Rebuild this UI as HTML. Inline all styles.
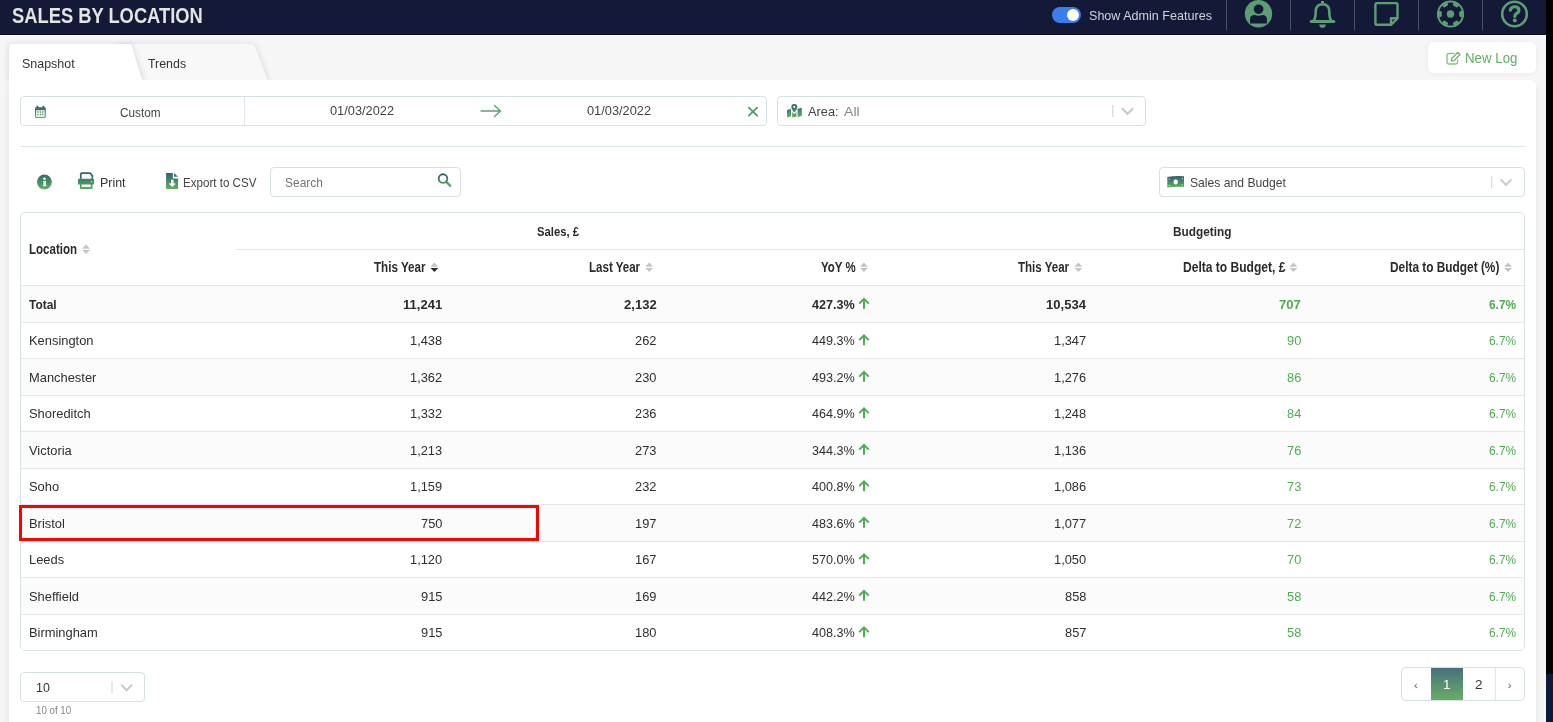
<!DOCTYPE html><html><head><meta charset="utf-8"><style>
*{box-sizing:border-box;margin:0;padding:0}
html,body{width:1553px;height:722px;overflow:hidden;background:#000;font-family:"Liberation Sans",sans-serif;color:#333}
.t{position:absolute;white-space:pre;line-height:1}
.a{position:absolute}
.box{position:absolute;border:1px solid #d6e1e4;border-radius:4px;background:#fff}
svg{position:absolute;overflow:visible}
</style></head><body>
<svg style="left:0;top:0" width="0" height="0"><defs><linearGradient id="gCal" gradientUnits="userSpaceOnUse" x1="0" y1="105.8" x2="0" y2="118"><stop offset="0" stop-color="#2f6170"/><stop offset="1" stop-color="#5bb05f"/></linearGradient><linearGradient id="gMap" gradientUnits="userSpaceOnUse" x1="0" y1="104" x2="0" y2="117.5"><stop offset="0" stop-color="#2f6170"/><stop offset="1" stop-color="#5bb05f"/></linearGradient><linearGradient id="gTool" gradientUnits="userSpaceOnUse" x1="0" y1="173" x2="0" y2="189"><stop offset="0" stop-color="#2f6170"/><stop offset="1" stop-color="#5bb05f"/></linearGradient><linearGradient id="gSrch" gradientUnits="userSpaceOnUse" x1="0" y1="174" x2="0" y2="187"><stop offset="0" stop-color="#2f6170"/><stop offset="1" stop-color="#5bb05f"/></linearGradient><linearGradient id="gMon" gradientUnits="userSpaceOnUse" x1="0" y1="176" x2="0" y2="187.6"><stop offset="0" stop-color="#2f6170"/><stop offset="1" stop-color="#5bb05f"/></linearGradient></defs></svg>
<div class="a" style="left:0;top:0;width:1546px;height:722px;background:#f6f6f6"></div>
<div class="a" style="left:1546px;top:674px;width:7px;height:48px;background:#0b1a38"></div>
<div class="a" style="left:0;top:0;width:1546px;height:35px;background:#131936;border-bottom:1px solid #070c22"></div>
<div class="a" style="left:0;top:35px;width:1546px;height:1px;background:#fdfdfd"></div>
<div class="t" style="left:12.30px;top:6px;font-size:21.40px;font-weight:bold;color:#e4e4e2;transform:scaleX(0.8569);transform-origin:0 0;">SALES BY LOCATION</div>
<div class="a" style="left:1052px;top:7px;width:29px;height:16px;border-radius:8px;background:#3b7ded"></div>
<div class="a" style="left:1066.5px;top:8.8px;width:12.4px;height:12.4px;border-radius:50%;background:#fff"></div>
<div class="t" style="left:1088.70px;top:9px;font-size:13.60px;color:#d2d3d8;transform:scaleX(0.9243);transform-origin:0 0;">Show Admin Features</div>
<div class="a" style="left:1226.0px;top:0;width:1px;height:30px;background:#4a5068"></div>
<div class="a" style="left:1290.0px;top:0;width:1px;height:30px;background:#4a5068"></div>
<div class="a" style="left:1354.0px;top:0;width:1px;height:30px;background:#4a5068"></div>
<div class="a" style="left:1418.0px;top:0;width:1px;height:30px;background:#4a5068"></div>
<div class="a" style="left:1482.0px;top:0;width:1px;height:30px;background:#4a5068"></div>
<svg style="left:0;top:0" width="1553" height="35" viewBox="0 0 1553 35"><circle cx="1258.5" cy="13.7" r="13.7" fill="#5c9e74"/><circle cx="1258.6" cy="9.2" r="4.8" fill="#131936"/><path d="M1250 23.6 V19.5 Q1250 15 1254.5 15 Q1256.5 15.8 1258.5 15.8 Q1260.5 15.8 1262.5 15 Q1267 15 1267 19.5 V23.6 Z" fill="#131936"/><path d="M1322.5 1 V3.2" stroke="#5c9e74" stroke-width="3"/><path d="M1313.6 20.6 C1315.6 18.4 1315.7 14.5 1315.7 11.5 C1315.7 6.6 1318.4 4.2 1322.5 4.2 C1326.6 4.2 1329.3 6.6 1329.3 11.5 C1329.3 14.5 1329.4 18.4 1331.4 20.6" fill="none" stroke="#5c9e74" stroke-width="2.6" stroke-linecap="round"/><path d="M1311.2 21.6 H1333.8" stroke="#5c9e74" stroke-width="3" stroke-linecap="round"/><path d="M1319.2 24.4 H1325.8 Q1325.6 27.8 1322.5 27.8 Q1319.4 27.8 1319.2 24.4 Z" fill="#5c9e74"/><path d="M1377 3.1 H1396 Q1397.5 3.1 1397.5 4.6 V18.3 L1391 24.8 H1377 Q1375.4 24.8 1375.4 23.2 V4.6 Q1375.4 3.1 1377 3.1 Z" fill="none" stroke="#5c9e74" stroke-width="2.4" stroke-linejoin="round"/><path d="M1397.5 18.3 H1391 V24.8" fill="none" stroke="#5c9e74" stroke-width="2.4" stroke-linejoin="round"/><circle cx="1450.5" cy="14" r="12.6" fill="none" stroke="#5c9e74" stroke-width="2"/><circle cx="1450.5" cy="14" r="3.7" fill="#5c9e74"/><circle cx="1514.5" cy="14" r="12.3" fill="none" stroke="#5c9e74" stroke-width="2.6"/><path d="M1510.3 10.2 Q1511 6.8 1514.8 6.8 Q1518.9 6.8 1518.9 10.2 Q1518.9 12.3 1516.7 13.4 Q1514.8 14.3 1514.8 16.4" fill="none" stroke="#5c9e74" stroke-width="3.1" stroke-linecap="round"/><circle cx="1514.8" cy="20.4" r="2" fill="#5c9e74"/></svg>
<svg style="left:0;top:0" width="1553" height="35" viewBox="0 0 1553 35"><rect x="-2.9" y="-2.3" width="5.8" height="4.6" rx="1.5" fill="#5c9e74" transform="translate(1450.5 14) rotate(0) translate(11 0) rotate(90)"/><rect x="-2.9" y="-2.3" width="5.8" height="4.6" rx="1.5" fill="#5c9e74" transform="translate(1450.5 14) rotate(60) translate(11 0) rotate(90)"/><rect x="-2.9" y="-2.3" width="5.8" height="4.6" rx="1.5" fill="#5c9e74" transform="translate(1450.5 14) rotate(120) translate(11 0) rotate(90)"/><rect x="-2.9" y="-2.3" width="5.8" height="4.6" rx="1.5" fill="#5c9e74" transform="translate(1450.5 14) rotate(180) translate(11 0) rotate(90)"/><rect x="-2.9" y="-2.3" width="5.8" height="4.6" rx="1.5" fill="#5c9e74" transform="translate(1450.5 14) rotate(240) translate(11 0) rotate(90)"/><rect x="-2.9" y="-2.3" width="5.8" height="4.6" rx="1.5" fill="#5c9e74" transform="translate(1450.5 14) rotate(300) translate(11 0) rotate(90)"/></svg>
<svg style="left:0;top:0" width="1553" height="90" viewBox="0 0 1553 90">
<defs><filter id="sh" x="-20%" y="-50%" width="140%" height="200%"><feGaussianBlur stdDeviation="3"/></filter>
<linearGradient id="g1" x1="0" y1="0" x2="0" y2="1"><stop offset="0" stop-color="#33636f"/><stop offset="1" stop-color="#5daf60"/></linearGradient></defs>
<path d="M116 82 V48 Q116 44 120 44 H252 Q255 44 256.5 48 L270 82 Z" fill="#000" opacity="0.10" filter="url(#sh)"/>
<path d="M115 80 V48 Q115 44 119 44 H251 Q254 44 255 47 L267.5 80 Z" fill="#f8f8f8"/>
<path d="M8 82 V48 Q8 44 12 44 H129 Q132 44 133.5 48 L145 82 Z" fill="#000" opacity="0.10" filter="url(#sh)"/>
<path d="M9 80 V48 Q9 44 13 44 H128 Q131 44 132 47 L142 80 Z" fill="#fff"/>
<rect x="1427.5" y="43" width="108.5" height="31" rx="6" fill="#000" opacity="0.045" filter="url(#sh)"/>
<rect x="7" y="84" width="1531" height="700" rx="6" fill="#000" opacity="0.05" filter="url(#sh)"/>
</svg>
<div class="t" style="left:21.50px;top:58px;font-size:12.80px;color:#333;transform:scaleX(0.9726);transform-origin:0 0;">Snapshot</div>
<div class="t" style="left:147.90px;top:58px;font-size:12.80px;color:#333;transform:scaleX(0.9680);transform-origin:0 0;">Trends</div>
<div class="a" style="left:1428px;top:42px;width:108px;height:31px;border-radius:6px;background:#fff"></div>
<svg style="left:0;top:0" width="1553" height="80"><path d="M1454.5 53.5 H1448.8 Q1447 53.5 1447 55.3 V62.3 Q1447 64 1448.8 64 H1455.8 Q1457.5 64 1457.5 62.3 V59.6" fill="none" stroke="#5fb062" stroke-width="1.4" opacity="0.75"/><path d="M1451.5 60.8 L1451.8 58.4 L1457.8 52.4 L1460 54.6 L1454 60.6 Z" fill="none" stroke="#5fb062" stroke-width="1.3" stroke-linejoin="round"/></svg>
<div class="t" style="left:1464.60px;top:52px;font-size:13.80px;color:#5fb062;transform:scaleX(0.9625);transform-origin:0 0;">New Log</div>
<div class="a" style="left:9px;top:80px;width:1527px;height:660px;background:#fff;border-radius:0 6px 0 0"></div>
<div class="box" style="left:20px;top:96px;width:747px;height:30px"></div>
<div class="a" style="left:244px;top:97px;width:1px;height:28px;background:#dde6e8"></div>
<svg style="left:0;top:0" width="1553" height="140"><defs><linearGradient id="g2" x1="0" y1="0" x2="0" y2="1"><stop offset="0" stop-color="#33636f"/><stop offset="1" stop-color="#5daf60"/></linearGradient></defs><rect x="35" y="107.2" width="10.8" height="10.8" rx="1.2" fill="url(#gCal)"/><rect x="36.5" y="105.8" width="1.8" height="3" fill="url(#gCal)"/><rect x="42.5" y="105.8" width="1.8" height="3" fill="url(#gCal)"/><rect x="36.2" y="110.3" width="8.4" height="6.6" fill="#fff"/><g fill="#5a9a6a"><rect x="37.3" y="111.2" width="1.3" height="1.6"/><rect x="39.7" y="111.2" width="1.3" height="1.6"/><rect x="42.1" y="111.2" width="1.3" height="1.6"/><rect x="37.3" y="113.8" width="1.3" height="1.6"/><rect x="39.7" y="113.8" width="1.3" height="1.6"/><rect x="42.1" y="113.8" width="1.3" height="1.6"/></g><path d="M481 111 H500.5 M494.5 105.5 L500.5 111 L494.5 116.5" fill="none" stroke="#5f9f74" stroke-width="1.3" stroke-linecap="round"/><path d="M748.8 107.6 L757.2 115.6 M757.2 107.6 L748.8 115.6" stroke="#4f9a6c" stroke-width="1.8" stroke-linecap="round"/></svg>
<div class="t" style="left:119.80px;top:107px;font-size:12.70px;color:#444;transform:scaleX(0.9257);transform-origin:0 0;">Custom</div>
<div class="t" style="left:330.30px;top:105px;font-size:12.70px;color:#444;transform:scaleX(1.0084);transform-origin:0 0;">01/03/2022</div>
<div class="t" style="left:586.60px;top:105px;font-size:12.70px;color:#444;transform:scaleX(1.0084);transform-origin:0 0;">01/03/2022</div>
<div class="box" style="left:777px;top:96px;width:369px;height:30px"></div>
<svg style="left:0;top:0" width="1553" height="140"><defs><linearGradient id="g3" x1="0" y1="0" x2="0" y2="1"><stop offset="0" stop-color="#33636f"/><stop offset="1" stop-color="#5daf60"/></linearGradient></defs><path d="M787 110 L791 108.8 V116.3 L787 117.5 Z M792.2 112 L794.3 114.3 L796.4 112 V116.8 L792.2 117.4 Z M797.6 108.8 L801.8 107.8 V115.8 L797.6 117.2 Z" fill="url(#gMap)"/><path d="M794.3 104 Q797.3 104 797.3 107 Q797.3 109 794.3 112.6 Q791.3 109 791.3 107 Q791.3 104 794.3 104 Z" fill="url(#gMap)"/><circle cx="794.3" cy="106.8" r="1.1" fill="#fff"/><rect x="1112.3" y="105" width="1" height="12" fill="#cfcfcf"/><path d="M1121.8 108.2 L1127.5 113.8 L1133.2 108.2" fill="none" stroke="#c8c8c8" stroke-width="2"/></svg>
<div class="t" style="left:807.70px;top:105px;font-size:13.30px;color:#444;transform:scaleX(0.9627);transform-origin:0 0;">Area:</div>
<div class="t" style="left:844.00px;top:105px;font-size:13.30px;color:#888;transform:scaleX(1.0635);transform-origin:0 0;">All</div>
<div class="a" style="left:20px;top:146px;width:1505px;height:1px;background:#dde6e8"></div>
<div class="box" style="left:270px;top:167px;width:191px;height:30px"></div>
<div class="box" style="left:1159px;top:167px;width:366px;height:30px"></div>
<svg style="left:0;top:0" width="1553" height="200"><defs><linearGradient id="g4" x1="0" y1="0" x2="0" y2="1"><stop offset="0" stop-color="#33636f"/><stop offset="1" stop-color="#5daf60"/></linearGradient></defs><circle cx="44.4" cy="181.9" r="7.4" fill="url(#gTool)"/><circle cx="44.5" cy="178.8" r="1.3" fill="#fff"/><path d="M43 181 H45.8 V185.3 H46.3 V186.2 H42.8 V185.3 H43.5 V182 H43 Z" fill="#fff"/><path d="M80.8 180 V174.3 Q80.8 173.2 81.9 173.2 H90 L92.3 175.5 V180" fill="none" stroke="url(#gTool)" stroke-width="1.8"/><path d="M79.2 178.8 H92.8 Q94 178.8 94 180 V184.6 H78 V180 Q78 178.8 79.2 178.8 Z" fill="url(#gTool)"/><path d="M80.8 183.5 V188 H91.6 V183.5" fill="none" stroke="url(#gTool)" stroke-width="1.8"/><circle cx="91.4" cy="181.6" r="0.6" fill="#fff"/><path d="M166.1 173 H172.8 V178.4 H178 V188.9 H166.1 Z" fill="url(#gTool)"/><path d="M174 173 L178 176.8 H174 Z" fill="url(#gTool)"/><path d="M171 179.8 H173.6 V183.4 H176 L172.3 187 L168.5 183.4 H171 Z" fill="#fff"/><circle cx="443" cy="178.6" r="4.3" fill="none" stroke="url(#gSrch)" stroke-width="1.9"/><path d="M446.2 181.8 L450.3 185.9" stroke="url(#gSrch)" stroke-width="2.2" stroke-linecap="round"/><path d="M1167.3 177 Q1175 175.6 1184 176.3 V187 Q1175 186.2 1167.3 187.6 Z" fill="url(#gMon)"/><ellipse cx="1175.7" cy="181.9" rx="2.2" ry="2.6" fill="#fff"/><circle cx="1169.3" cy="179" r="0.6" fill="#fff"/><circle cx="1182.2" cy="178.6" r="0.6" fill="#fff"/><circle cx="1169.3" cy="185.6" r="0.6" fill="#fff"/><circle cx="1182.2" cy="184.9" r="0.6" fill="#fff"/><rect x="1491.2" y="176.3" width="1" height="12" fill="#cfcfcf"/><path d="M1500.6 179.4 L1506 184.9 L1511.4 179.4" fill="none" stroke="#c8c8c8" stroke-width="2"/></svg>
<div class="t" style="left:99.50px;top:176px;font-size:13.00px;color:#333;transform:scaleX(0.9545);transform-origin:0 0;">Print</div>
<div class="t" style="left:183.40px;top:176px;font-size:13.00px;color:#444;transform:scaleX(0.8913);transform-origin:0 0;">Export to CSV</div>
<div class="t" style="left:284.50px;top:176px;font-size:13.40px;color:#757575;transform:scaleX(0.8946);transform-origin:0 0;">Search</div>
<div class="t" style="left:1190.00px;top:176px;font-size:13.50px;color:#444;transform:scaleX(0.9007);transform-origin:0 0;">Sales and Budget</div>
<div class="a" style="left:20px;top:212px;width:1505px;height:439px;border:1px solid #d6e1e4;border-radius:5px;background:#fff;overflow:hidden">
<div class="a" style="left:0;top:72.5px;width:1505px;height:36.5px;background:#fbfbfb"></div>
<div class="a" style="left:0;top:109.0px;width:1505px;height:36.5px;background:#ffffff"></div>
<div class="a" style="left:0;top:145.5px;width:1505px;height:36.5px;background:#fbfbfb"></div>
<div class="a" style="left:0;top:182.0px;width:1505px;height:36.5px;background:#ffffff"></div>
<div class="a" style="left:0;top:218.5px;width:1505px;height:36.5px;background:#fbfbfb"></div>
<div class="a" style="left:0;top:255.0px;width:1505px;height:36.5px;background:#ffffff"></div>
<div class="a" style="left:0;top:291.5px;width:1505px;height:36.5px;background:#fbfbfb"></div>
<div class="a" style="left:0;top:328.0px;width:1505px;height:36.5px;background:#ffffff"></div>
<div class="a" style="left:0;top:364.5px;width:1505px;height:36.5px;background:#fbfbfb"></div>
<div class="a" style="left:0;top:401.0px;width:1505px;height:36.5px;background:#ffffff"></div>
</div>
<div class="a" style="left:236px;top:248.5px;width:1288px;height:1px;background:#dfe6e8"></div>
<div class="a" style="left:21px;top:285.0px;width:1503px;height:1px;background:#dfe6e8"></div>
<div class="a" style="left:21px;top:321.5px;width:1503px;height:1px;background:#e4e6ea"></div>
<div class="a" style="left:21px;top:358.0px;width:1503px;height:1px;background:#e4e6ea"></div>
<div class="a" style="left:21px;top:394.5px;width:1503px;height:1px;background:#e4e6ea"></div>
<div class="a" style="left:21px;top:431.0px;width:1503px;height:1px;background:#e4e6ea"></div>
<div class="a" style="left:21px;top:467.5px;width:1503px;height:1px;background:#e4e6ea"></div>
<div class="a" style="left:21px;top:504.0px;width:1503px;height:1px;background:#e4e6ea"></div>
<div class="a" style="left:21px;top:540.5px;width:1503px;height:1px;background:#e4e6ea"></div>
<div class="a" style="left:21px;top:577.0px;width:1503px;height:1px;background:#e4e6ea"></div>
<div class="a" style="left:21px;top:613.5px;width:1503px;height:1px;background:#e4e6ea"></div>
<div class="t" style="left:29.40px;top:242px;font-size:14.00px;font-weight:bold;color:#2b2b2b;transform:scaleX(0.8232);transform-origin:0 0;">Location</div>
<div class="t" style="left:536.80px;top:225px;font-size:13.50px;font-weight:bold;color:#2b2b2b;transform:scaleX(0.8352);transform-origin:0 0;">Sales, £</div>
<div class="t" style="left:1172.70px;top:225px;font-size:13.50px;font-weight:bold;color:#2b2b2b;transform:scaleX(0.8763);transform-origin:0 0;">Budgeting</div>
<div class="t" style="left:374.00px;top:260px;font-size:14.00px;font-weight:bold;color:#2b2b2b;transform:scaleX(0.8304);transform-origin:0 0;">This Year</div>
<div class="t" style="left:589.10px;top:260px;font-size:14.00px;font-weight:bold;color:#2b2b2b;transform:scaleX(0.8239);transform-origin:0 0;">Last Year</div>
<div class="t" style="left:820.60px;top:260px;font-size:14.00px;font-weight:bold;color:#2b2b2b;transform:scaleX(0.8184);transform-origin:0 0;">YoY %</div>
<div class="t" style="left:1018.40px;top:260px;font-size:14.00px;font-weight:bold;color:#2b2b2b;transform:scaleX(0.8239);transform-origin:0 0;">This Year</div>
<div class="t" style="left:1182.60px;top:260px;font-size:14.00px;font-weight:bold;color:#2b2b2b;transform:scaleX(0.8605);transform-origin:0 0;">Delta to Budget, £</div>
<div class="t" style="left:1389.70px;top:260px;font-size:14.00px;font-weight:bold;color:#2b2b2b;transform:scaleX(0.8468);transform-origin:0 0;">Delta to Budget (%)</div>
<svg style="left:0;top:0" width="1553" height="300"><path d="M82.20 248.70 L86.10 244.50 L90.00 248.70 Z" fill="#c4c4c4"/><path d="M82.20 249.90 L86.10 254.10 L90.00 249.90 Z" fill="#c4c4c4"/><path d="M430.50 266.70 L434.40 262.50 L438.30 266.70 Z" fill="#c4c4c4"/><path d="M430.50 267.90 L434.40 272.10 L438.30 267.90 Z" fill="#2b2b2b"/><path d="M645.20 266.70 L649.10 262.50 L653.00 266.70 Z" fill="#c4c4c4"/><path d="M645.20 267.90 L649.10 272.10 L653.00 267.90 Z" fill="#c4c4c4"/><path d="M860.00 266.70 L863.90 262.50 L867.80 266.70 Z" fill="#c4c4c4"/><path d="M860.00 267.90 L863.90 272.10 L867.80 267.90 Z" fill="#c4c4c4"/><path d="M1074.50 266.70 L1078.40 262.50 L1082.30 266.70 Z" fill="#c4c4c4"/><path d="M1074.50 267.90 L1078.40 272.10 L1082.30 267.90 Z" fill="#c4c4c4"/><path d="M1289.50 266.70 L1293.40 262.50 L1297.30 266.70 Z" fill="#c4c4c4"/><path d="M1289.50 267.90 L1293.40 272.10 L1297.30 267.90 Z" fill="#c4c4c4"/><path d="M1504.20 266.70 L1508.10 262.50 L1512.00 266.70 Z" fill="#c4c4c4"/><path d="M1504.20 267.90 L1508.10 272.10 L1512.00 267.90 Z" fill="#c4c4c4"/></svg>
<div class="t" style="left:29.40px;top:298px;font-size:13.50px;font-weight:bold;color:#2b2b2b;transform:scaleX(0.8831);transform-origin:0 0;">Total</div>
<div class="t" style="left:402.65px;top:298px;font-size:13.50px;font-weight:bold;color:#2b2b2b;transform:scaleX(0.9700);transform-origin:0 0;">11,241</div>
<div class="t" style="left:623.90px;top:298px;font-size:13.50px;font-weight:bold;color:#2b2b2b;transform:scaleX(0.9700);transform-origin:0 0;">2,132</div>
<div class="t" style="left:812.41px;top:298px;font-size:13.50px;font-weight:bold;color:#2b2b2b;transform:scaleX(0.9350);transform-origin:0 0;">427.3%</div>
<div class="t" style="left:1046.33px;top:298px;font-size:13.50px;font-weight:bold;color:#2b2b2b;transform:scaleX(0.9700);transform-origin:0 0;">10,534</div>
<div class="t" style="left:1279.33px;top:298px;font-size:13.50px;font-weight:bold;color:#4cae50;transform:scaleX(0.9700);transform-origin:0 0;">707</div>
<div class="t" style="left:1488.51px;top:298px;font-size:13.50px;font-weight:bold;color:#4cae50;transform:scaleX(0.8800);transform-origin:0 0;">6.7%</div>
<div class="t" style="left:29.40px;top:334px;font-size:13.50px;color:#2e2e2e;transform:scaleX(0.9550);transform-origin:0 0;">Kensington</div>
<div class="t" style="left:409.87px;top:334px;font-size:13.50px;color:#2e2e2e;transform:scaleX(0.9500);transform-origin:0 0;">1,438</div>
<div class="t" style="left:635.28px;top:334px;font-size:13.50px;color:#2e2e2e;transform:scaleX(0.9500);transform-origin:0 0;">262</div>
<div class="t" style="left:812.41px;top:334px;font-size:13.50px;color:#2e2e2e;transform:scaleX(0.9350);transform-origin:0 0;">449.3%</div>
<div class="t" style="left:1054.27px;top:334px;font-size:13.50px;color:#2e2e2e;transform:scaleX(0.9500);transform-origin:0 0;">1,347</div>
<div class="t" style="left:1286.96px;top:334px;font-size:13.50px;color:#4cae50;transform:scaleX(0.9500);transform-origin:0 0;">90</div>
<div class="t" style="left:1488.51px;top:334px;font-size:13.50px;color:#4cae50;transform:scaleX(0.8800);transform-origin:0 0;">6.7%</div>
<div class="t" style="left:29.40px;top:371px;font-size:13.50px;color:#2e2e2e;transform:scaleX(0.9550);transform-origin:0 0;">Manchester</div>
<div class="t" style="left:409.87px;top:371px;font-size:13.50px;color:#2e2e2e;transform:scaleX(0.9500);transform-origin:0 0;">1,362</div>
<div class="t" style="left:635.28px;top:371px;font-size:13.50px;color:#2e2e2e;transform:scaleX(0.9500);transform-origin:0 0;">230</div>
<div class="t" style="left:812.41px;top:371px;font-size:13.50px;color:#2e2e2e;transform:scaleX(0.9350);transform-origin:0 0;">493.2%</div>
<div class="t" style="left:1054.27px;top:371px;font-size:13.50px;color:#2e2e2e;transform:scaleX(0.9500);transform-origin:0 0;">1,276</div>
<div class="t" style="left:1286.96px;top:371px;font-size:13.50px;color:#4cae50;transform:scaleX(0.9500);transform-origin:0 0;">86</div>
<div class="t" style="left:1488.51px;top:371px;font-size:13.50px;color:#4cae50;transform:scaleX(0.8800);transform-origin:0 0;">6.7%</div>
<div class="t" style="left:29.40px;top:407px;font-size:13.50px;color:#2e2e2e;transform:scaleX(0.9550);transform-origin:0 0;">Shoreditch</div>
<div class="t" style="left:409.87px;top:407px;font-size:13.50px;color:#2e2e2e;transform:scaleX(0.9500);transform-origin:0 0;">1,332</div>
<div class="t" style="left:635.28px;top:407px;font-size:13.50px;color:#2e2e2e;transform:scaleX(0.9500);transform-origin:0 0;">236</div>
<div class="t" style="left:812.41px;top:407px;font-size:13.50px;color:#2e2e2e;transform:scaleX(0.9350);transform-origin:0 0;">464.9%</div>
<div class="t" style="left:1054.27px;top:407px;font-size:13.50px;color:#2e2e2e;transform:scaleX(0.9500);transform-origin:0 0;">1,248</div>
<div class="t" style="left:1286.96px;top:407px;font-size:13.50px;color:#4cae50;transform:scaleX(0.9500);transform-origin:0 0;">84</div>
<div class="t" style="left:1488.51px;top:407px;font-size:13.50px;color:#4cae50;transform:scaleX(0.8800);transform-origin:0 0;">6.7%</div>
<div class="t" style="left:29.40px;top:444px;font-size:13.50px;color:#2e2e2e;transform:scaleX(0.9550);transform-origin:0 0;">Victoria</div>
<div class="t" style="left:409.87px;top:444px;font-size:13.50px;color:#2e2e2e;transform:scaleX(0.9500);transform-origin:0 0;">1,213</div>
<div class="t" style="left:635.28px;top:444px;font-size:13.50px;color:#2e2e2e;transform:scaleX(0.9500);transform-origin:0 0;">273</div>
<div class="t" style="left:812.41px;top:444px;font-size:13.50px;color:#2e2e2e;transform:scaleX(0.9350);transform-origin:0 0;">344.3%</div>
<div class="t" style="left:1054.27px;top:444px;font-size:13.50px;color:#2e2e2e;transform:scaleX(0.9500);transform-origin:0 0;">1,136</div>
<div class="t" style="left:1286.96px;top:444px;font-size:13.50px;color:#4cae50;transform:scaleX(0.9500);transform-origin:0 0;">76</div>
<div class="t" style="left:1488.51px;top:444px;font-size:13.50px;color:#4cae50;transform:scaleX(0.8800);transform-origin:0 0;">6.7%</div>
<div class="t" style="left:29.40px;top:480px;font-size:13.50px;color:#2e2e2e;transform:scaleX(0.9550);transform-origin:0 0;">Soho</div>
<div class="t" style="left:409.87px;top:480px;font-size:13.50px;color:#2e2e2e;transform:scaleX(0.9500);transform-origin:0 0;">1,159</div>
<div class="t" style="left:635.28px;top:480px;font-size:13.50px;color:#2e2e2e;transform:scaleX(0.9500);transform-origin:0 0;">232</div>
<div class="t" style="left:812.41px;top:480px;font-size:13.50px;color:#2e2e2e;transform:scaleX(0.9350);transform-origin:0 0;">400.8%</div>
<div class="t" style="left:1054.27px;top:480px;font-size:13.50px;color:#2e2e2e;transform:scaleX(0.9500);transform-origin:0 0;">1,086</div>
<div class="t" style="left:1286.96px;top:480px;font-size:13.50px;color:#4cae50;transform:scaleX(0.9500);transform-origin:0 0;">73</div>
<div class="t" style="left:1488.51px;top:480px;font-size:13.50px;color:#4cae50;transform:scaleX(0.8800);transform-origin:0 0;">6.7%</div>
<div class="t" style="left:29.40px;top:517px;font-size:13.50px;color:#2e2e2e;transform:scaleX(0.9550);transform-origin:0 0;">Bristol</div>
<div class="t" style="left:420.58px;top:517px;font-size:13.50px;color:#2e2e2e;transform:scaleX(0.9500);transform-origin:0 0;">750</div>
<div class="t" style="left:635.28px;top:517px;font-size:13.50px;color:#2e2e2e;transform:scaleX(0.9500);transform-origin:0 0;">197</div>
<div class="t" style="left:812.41px;top:517px;font-size:13.50px;color:#2e2e2e;transform:scaleX(0.9350);transform-origin:0 0;">483.6%</div>
<div class="t" style="left:1054.27px;top:517px;font-size:13.50px;color:#2e2e2e;transform:scaleX(0.9500);transform-origin:0 0;">1,077</div>
<div class="t" style="left:1286.96px;top:517px;font-size:13.50px;color:#4cae50;transform:scaleX(0.9500);transform-origin:0 0;">72</div>
<div class="t" style="left:1488.51px;top:517px;font-size:13.50px;color:#4cae50;transform:scaleX(0.8800);transform-origin:0 0;">6.7%</div>
<div class="t" style="left:29.40px;top:553px;font-size:13.50px;color:#2e2e2e;transform:scaleX(0.9550);transform-origin:0 0;">Leeds</div>
<div class="t" style="left:409.87px;top:553px;font-size:13.50px;color:#2e2e2e;transform:scaleX(0.9500);transform-origin:0 0;">1,120</div>
<div class="t" style="left:635.28px;top:553px;font-size:13.50px;color:#2e2e2e;transform:scaleX(0.9500);transform-origin:0 0;">167</div>
<div class="t" style="left:812.41px;top:553px;font-size:13.50px;color:#2e2e2e;transform:scaleX(0.9350);transform-origin:0 0;">570.0%</div>
<div class="t" style="left:1054.27px;top:553px;font-size:13.50px;color:#2e2e2e;transform:scaleX(0.9500);transform-origin:0 0;">1,050</div>
<div class="t" style="left:1286.96px;top:553px;font-size:13.50px;color:#4cae50;transform:scaleX(0.9500);transform-origin:0 0;">70</div>
<div class="t" style="left:1488.51px;top:553px;font-size:13.50px;color:#4cae50;transform:scaleX(0.8800);transform-origin:0 0;">6.7%</div>
<div class="t" style="left:29.40px;top:590px;font-size:13.50px;color:#2e2e2e;transform:scaleX(0.9550);transform-origin:0 0;">Sheffield</div>
<div class="t" style="left:420.58px;top:590px;font-size:13.50px;color:#2e2e2e;transform:scaleX(0.9500);transform-origin:0 0;">915</div>
<div class="t" style="left:635.28px;top:590px;font-size:13.50px;color:#2e2e2e;transform:scaleX(0.9500);transform-origin:0 0;">169</div>
<div class="t" style="left:812.41px;top:590px;font-size:13.50px;color:#2e2e2e;transform:scaleX(0.9350);transform-origin:0 0;">442.2%</div>
<div class="t" style="left:1064.98px;top:590px;font-size:13.50px;color:#2e2e2e;transform:scaleX(0.9500);transform-origin:0 0;">858</div>
<div class="t" style="left:1286.96px;top:590px;font-size:13.50px;color:#4cae50;transform:scaleX(0.9500);transform-origin:0 0;">58</div>
<div class="t" style="left:1488.51px;top:590px;font-size:13.50px;color:#4cae50;transform:scaleX(0.8800);transform-origin:0 0;">6.7%</div>
<div class="t" style="left:29.40px;top:626px;font-size:13.50px;color:#2e2e2e;transform:scaleX(0.9550);transform-origin:0 0;">Birmingham</div>
<div class="t" style="left:420.58px;top:626px;font-size:13.50px;color:#2e2e2e;transform:scaleX(0.9500);transform-origin:0 0;">915</div>
<div class="t" style="left:635.28px;top:626px;font-size:13.50px;color:#2e2e2e;transform:scaleX(0.9500);transform-origin:0 0;">180</div>
<div class="t" style="left:812.41px;top:626px;font-size:13.50px;color:#2e2e2e;transform:scaleX(0.9350);transform-origin:0 0;">408.3%</div>
<div class="t" style="left:1064.98px;top:626px;font-size:13.50px;color:#2e2e2e;transform:scaleX(0.9500);transform-origin:0 0;">857</div>
<div class="t" style="left:1286.96px;top:626px;font-size:13.50px;color:#4cae50;transform:scaleX(0.9500);transform-origin:0 0;">58</div>
<div class="t" style="left:1488.51px;top:626px;font-size:13.50px;color:#4cae50;transform:scaleX(0.8800);transform-origin:0 0;">6.7%</div>
<svg style="left:0;top:0" width="1553" height="722"><path d="M864 308.80 V298.60 M859.2 303.60 L864 298.80 L868.8 303.60" fill="none" stroke="#4cae50" stroke-width="2" stroke-linecap="butt"/><path d="M864 345.30 V335.10 M859.2 340.10 L864 335.30 L868.8 340.10" fill="none" stroke="#4cae50" stroke-width="2" stroke-linecap="butt"/><path d="M864 381.80 V371.60 M859.2 376.60 L864 371.80 L868.8 376.60" fill="none" stroke="#4cae50" stroke-width="2" stroke-linecap="butt"/><path d="M864 418.30 V408.10 M859.2 413.10 L864 408.30 L868.8 413.10" fill="none" stroke="#4cae50" stroke-width="2" stroke-linecap="butt"/><path d="M864 454.80 V444.60 M859.2 449.60 L864 444.80 L868.8 449.60" fill="none" stroke="#4cae50" stroke-width="2" stroke-linecap="butt"/><path d="M864 491.30 V481.10 M859.2 486.10 L864 481.30 L868.8 486.10" fill="none" stroke="#4cae50" stroke-width="2" stroke-linecap="butt"/><path d="M864 527.80 V517.60 M859.2 522.60 L864 517.80 L868.8 522.60" fill="none" stroke="#4cae50" stroke-width="2" stroke-linecap="butt"/><path d="M864 564.30 V554.10 M859.2 559.10 L864 554.30 L868.8 559.10" fill="none" stroke="#4cae50" stroke-width="2" stroke-linecap="butt"/><path d="M864 600.80 V590.60 M859.2 595.60 L864 590.80 L868.8 595.60" fill="none" stroke="#4cae50" stroke-width="2" stroke-linecap="butt"/><path d="M864 637.30 V627.10 M859.2 632.10 L864 627.30 L868.8 632.10" fill="none" stroke="#4cae50" stroke-width="2" stroke-linecap="butt"/></svg>
<div class="a" style="left:19px;top:505px;width:520px;height:36px;border:3px solid #ff0000"></div>
<div class="box" style="left:20px;top:672px;width:125px;height:30px"></div>
<svg style="left:0;top:0" width="1553" height="722"><rect x="111.5" y="681" width="1" height="12" fill="#d0d0d0"/><path d="M121.2 684.6 L126.6 690.2 L132 684.6" fill="none" stroke="#c8c8c8" stroke-width="2"/></svg>
<div class="t" style="left:35.80px;top:681px;font-size:13.00px;color:#333;transform:scaleX(0.9563);transform-origin:0 0;">10</div>
<div class="t" style="left:35.80px;top:705px;font-size:10.50px;color:#858585;transform:scaleX(0.9274);transform-origin:0 0;">10 of 10</div>
<div class="a" style="left:1400.5px;top:667px;width:124.5px;height:34px;border:1px solid #d6e1e4;border-radius:5px;background:#fff;overflow:hidden"><div class="a" style="left:29.5px;top:0;width:32px;height:33px;background:linear-gradient(#4a6e7c,#66b166)"></div><div class="a" style="left:93.5px;top:0;width:1px;height:33px;background:#dfe6e8"></div></div>
<div class="t" style="left:1413.96px;top:680px;font-size:11.00px;color:#555;">‹</div>
<div class="t" style="left:1443.06px;top:678px;font-size:13.50px;color:#fff;transform:scaleX(0.9990);transform-origin:0 0;">1</div>
<div class="t" style="left:1475.26px;top:678px;font-size:13.50px;color:#333;transform:scaleX(0.9990);transform-origin:0 0;">2</div>
<div class="t" style="left:1507.66px;top:680px;font-size:11.00px;color:#555;">›</div>
</body></html>
